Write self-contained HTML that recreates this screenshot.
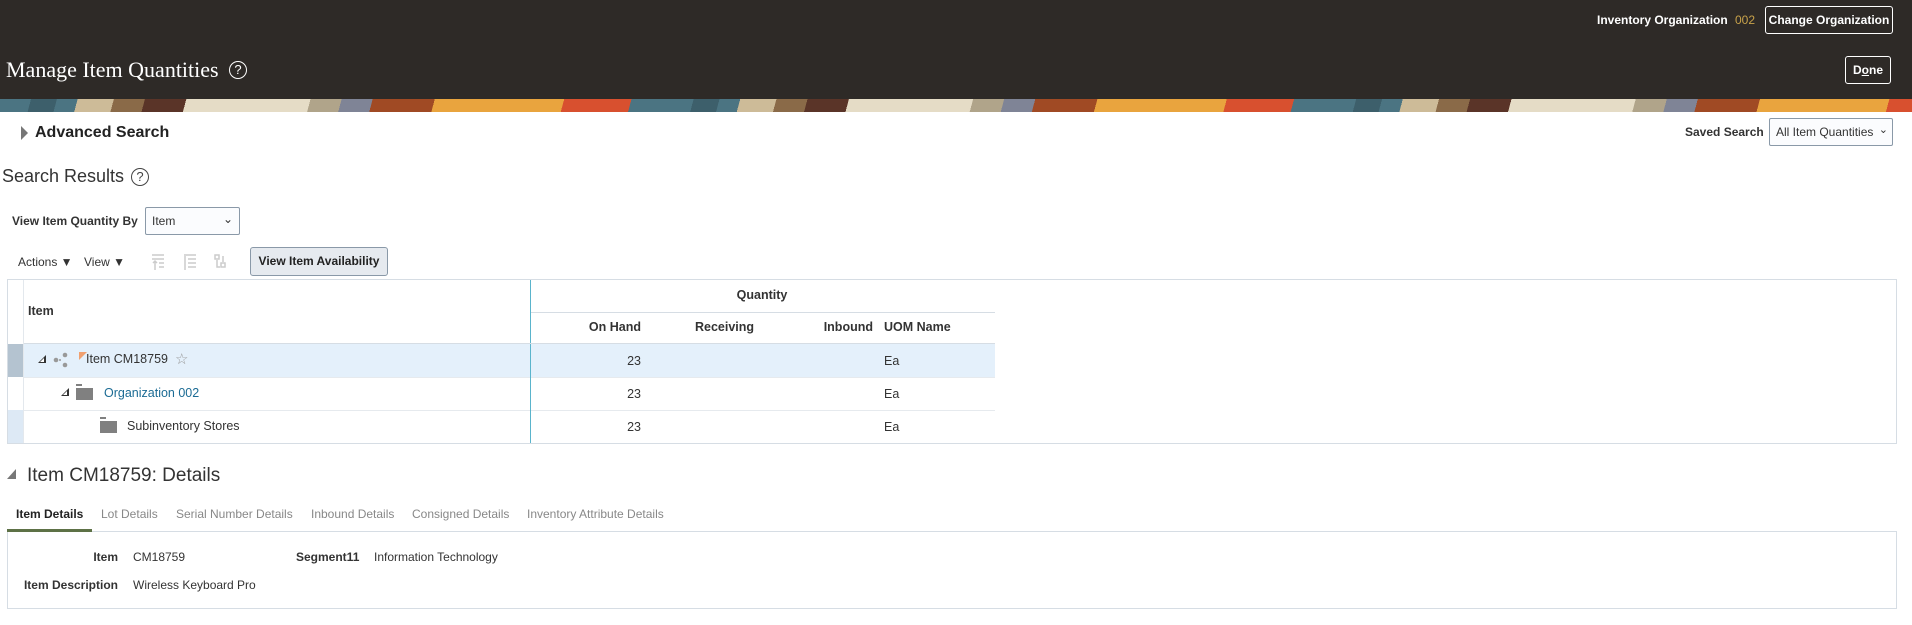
<!DOCTYPE html>
<html><head><meta charset="utf-8">
<style>
*{box-sizing:border-box;margin:0;padding:0}
body{width:1912px;height:625px;background:#fff;font-family:"Liberation Sans",sans-serif;color:#333;position:relative;overflow:hidden;font-size:13px}
.a{position:absolute;white-space:nowrap}
.hdr{position:absolute;left:0;top:0;width:1912px;height:99px;background:#2e2a27}
.ban{position:absolute;left:0;top:99px;width:1912px;height:13px;
background:repeating-linear-gradient(105deg,#4b7482 0 30px,#3d5f6b 30px 55px,#4b7482 55px 75px,#cdbb98 75px 110px,#8a6a48 110px 140px,#5a3428 140px 180px,#e5dcc6 180px 300px,#b0a48a 300px 330px,#7f8496 330px 360px,#a04a24 360px 420px,#e9a43e 420px 545px,#d8502f 545px 610px,#4b7482 610px 640px)}
.btn{position:absolute;border:1px solid #fff;border-radius:3px;color:#fff;font-weight:bold;font-size:12px;text-align:center;white-space:nowrap}
.sel{position:absolute;border:1px solid #8a99a8;border-radius:2px;background:#fbfcfe;font-size:12px;color:#333;padding-left:6px;white-space:nowrap}
.b{font-weight:bold}
.g{color:#888}
</style></head><body>
<div class="hdr"></div>
<div class="ban"></div>
<div class="a b" style="left:1597px;top:13px;color:#fff;font-size:12px">Inventory Organization</div>
<div class="a" style="left:1735px;top:13px;color:#c8a24a;font-size:12px">002</div>
<div class="btn" style="left:1765px;top:6px;width:128px;height:28px;line-height:26px">Change Organization</div>
<div class="a" style="left:6px;top:57px;color:#fff;font-family:'Liberation Serif',serif;font-size:22px">Manage Item Quantities</div>
<div class="a" style="left:229px;top:61px;width:18px;height:18px;border:1.5px solid #fff;border-radius:50%;color:#fff;font-size:13px;text-align:center;line-height:16px">?</div>
<div class="btn" style="left:1845px;top:56px;width:46px;height:28px;line-height:26px">D<span style="text-decoration:underline">o</span>ne</div>

<div class="a" style="left:21px;top:126px;width:0;height:0;border-left:7px solid #777;border-top:7px solid transparent;border-bottom:7px solid transparent"></div>
<div class="a b" style="left:35px;top:124px;font-size:16px;color:#222">Advanced Search</div>
<div class="a b" style="left:1685px;top:125px;font-size:12px;color:#333">Saved Search</div>
<div class="sel" style="left:1769px;top:118px;width:124px;height:28px;line-height:26px">All Item Quantities <span style="position:absolute;right:4px;top:-2px;font-size:11px">&#8964;</span></div>

<div class="a" style="left:2px;top:166px;font-size:18px;color:#333">Search Results</div>
<div class="a" style="left:131px;top:168px;width:18px;height:18px;border:1.5px solid #444;border-radius:50%;color:#444;font-size:13px;text-align:center;line-height:16px">?</div>

<div class="a b" style="left:12px;top:214px;font-size:12px">View Item Quantity By</div>
<div class="sel" style="left:145px;top:207px;width:95px;height:28px;line-height:26px">Item<span style="position:absolute;right:6px;top:-2px;font-size:12px">&#8964;</span></div>

<div class="a" style="left:18px;top:255px;font-size:12px">Actions &#9660;</div>
<div class="a" style="left:84px;top:255px;font-size:12px">View &#9660;</div>
<svg class="a" style="left:150px;top:253px" width="90" height="18" viewBox="0 0 90 18" fill="none" stroke="#ccc" stroke-width="1.5">
<path d="M2 2h12M2 6h12M9 10h5M9 14h5M5 8v9M3 10l2-2 2 2"/>
<path d="M34 2h12M38 6h8M38 10h8M38 14h8M35 3v14"/>
<path d="M65 2h4v4h-4zM71 10h4v4h-4zM67 7v7h3M73 3v6"/>
</svg>
<div class="a b" style="left:250px;top:247px;width:138px;height:29px;border:1px solid #8a99a8;border-radius:3px;background:#e6eaef;text-align:center;line-height:27px;font-size:12px;color:#222">View Item Availability</div>

<!-- table -->
<div class="a" style="left:7px;top:279px;width:1890px;height:165px;border:1px solid #d6dde4"></div>
<div class="a" style="left:23px;top:280px;width:1px;height:163px;background:#e3e8ed"></div>
<div class="a" style="left:530px;top:280px;width:1px;height:163px;background:#5ab4cc"></div>
<div class="a b" style="left:28px;top:304px;font-size:12.5px">Item</div>
<div class="a b" style="left:700px;top:288px;width:124px;text-align:center;font-size:12.5px">Quantity</div>
<div class="a" style="left:531px;top:312px;width:464px;height:1px;background:#d6dde4"></div>
<div class="a b" style="left:541px;top:320px;width:100px;text-align:right;font-size:12.5px">On Hand</div>
<div class="a b" style="left:695px;top:320px;font-size:12.5px">Receiving</div>
<div class="a b" style="left:773px;top:320px;width:100px;text-align:right;font-size:12.5px">Inbound</div>
<div class="a b" style="left:884px;top:320px;font-size:12.5px">UOM Name</div>
<div class="a" style="left:24px;top:343px;width:971px;height:1px;background:#d6dde4"></div>
<!-- rows -->
<div class="a" style="left:8px;top:344px;width:15px;height:33px;background:#b4c3d0"></div>
<div class="a" style="left:24px;top:344px;width:971px;height:33px;background:#e4f0fb"></div>
<div class="a" style="left:24px;top:377px;width:971px;height:1px;background:#e6eaee"></div>
<div class="a" style="left:24px;top:410px;width:971px;height:1px;background:#e6eaee"></div>
<div class="a" style="left:8px;top:410px;width:15px;height:33px;background:#dde9f5"></div>
<div class="a" style="left:8px;top:443px;width:987px;height:1px;background:#d6dde4"></div>
<div class="a" style="left:530px;top:344px;width:1px;height:99px;background:#5ab4cc"></div>
<!-- row1 -->
<svg class="a" style="left:37px;top:354px" width="10" height="10"><path d="M9 1v8H1z" fill="#333"/><path d="M7 4v4H3" fill="#fff"/></svg>
<svg class="a" style="left:53px;top:352px" width="16" height="16" fill="#999"><circle cx="3" cy="8" r="2.3"/><circle cx="12" cy="3" r="2.3"/><circle cx="12" cy="13" r="2.3"/><circle cx="7" cy="8" r="1"/></svg>
<svg class="a" style="left:79px;top:352px" width="8" height="8"><path d="M0 0h8L0 8z" fill="#f0a070"/></svg>
<div class="a" style="left:86px;top:352px;font-size:12.5px">Item CM18759</div>
<div class="a" style="left:175px;top:350px;color:#999;font-size:15px">&#9734;</div>
<div class="a" style="left:541px;top:354px;width:100px;text-align:right;font-size:12.5px">23</div>
<div class="a" style="left:884px;top:354px;font-size:12.5px">Ea</div>
<!-- row2 -->
<svg class="a" style="left:60px;top:387px" width="10" height="10"><path d="M9 1v8H1z" fill="#333"/><path d="M7 4v4H3" fill="#fff"/></svg>
<svg class="a" style="left:76px;top:384px" width="17" height="16" fill="#808080"><path d="M0 0h6v2H0zM0 4h17v12H0z"/></svg>
<div class="a" style="left:104px;top:386px;color:#1b6b94;font-size:12.5px">Organization 002</div>
<div class="a" style="left:541px;top:387px;width:100px;text-align:right;font-size:12.5px">23</div>
<div class="a" style="left:884px;top:387px;font-size:12.5px">Ea</div>
<!-- row3 -->
<svg class="a" style="left:100px;top:417px" width="17" height="16" fill="#808080"><path d="M0 0h6v2H0zM0 4h17v12H0z"/></svg>
<div class="a" style="left:127px;top:419px;font-size:12.5px">Subinventory Stores</div>
<div class="a" style="left:541px;top:420px;width:100px;text-align:right;font-size:12.5px">23</div>
<div class="a" style="left:884px;top:420px;font-size:12.5px">Ea</div>

<!-- details -->
<svg class="a" style="left:7px;top:469px" width="10" height="10"><path d="M9 0v10H0z" fill="#777"/></svg>
<div class="a" style="left:27px;top:465px;font-size:19px;color:#333">Item CM18759: Details</div>
<div class="a b" style="left:16px;top:507px;font-size:12px;color:#222">Item Details</div>
<div class="a g" style="left:101px;top:507px;font-size:12px">Lot Details</div>
<div class="a g" style="left:176px;top:507px;font-size:12px">Serial Number Details</div>
<div class="a g" style="left:311px;top:507px;font-size:12px">Inbound Details</div>
<div class="a g" style="left:412px;top:507px;font-size:12px">Consigned Details</div>
<div class="a g" style="left:527px;top:507px;font-size:12px">Inventory Attribute Details</div>
<div class="a" style="left:7px;top:531px;width:1890px;height:78px;border:1px solid #d6dde4"></div>
<div class="a" style="left:7px;top:529px;width:85px;height:3px;background:#5d7146"></div>
<div class="a b" style="left:18px;top:550px;width:100px;text-align:right;font-size:12px">Item</div>
<div class="a" style="left:133px;top:550px;font-size:12px">CM18759</div>
<div class="a b" style="left:296px;top:550px;font-size:12px">Segment11</div>
<div class="a" style="left:374px;top:550px;font-size:12px">Information Technology</div>
<div class="a b" style="left:18px;top:578px;width:100px;text-align:right;font-size:12px">Item Description</div>
<div class="a" style="left:133px;top:578px;font-size:12px">Wireless Keyboard Pro</div>
</body></html>
